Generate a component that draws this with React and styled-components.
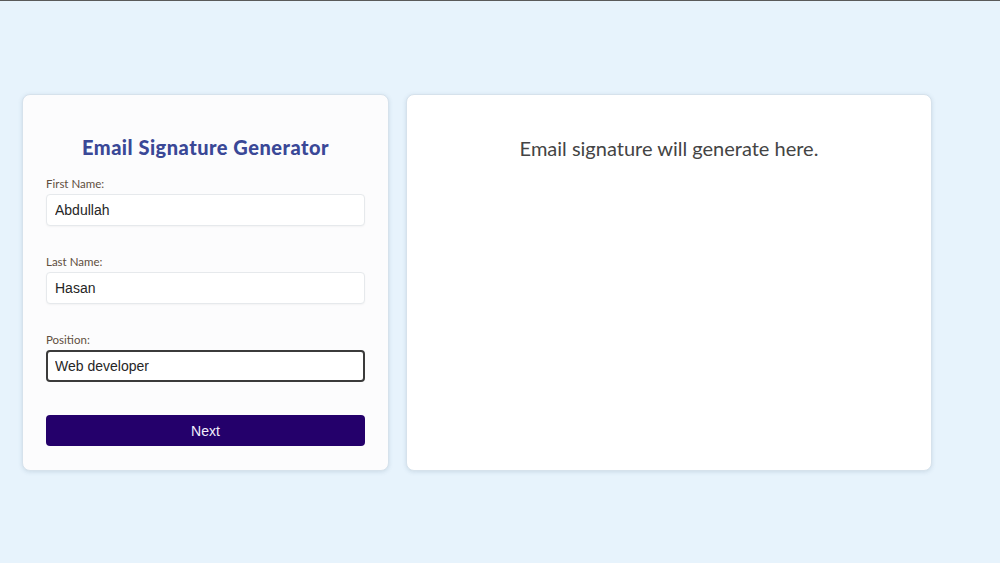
import React from "react";
import styled, { createGlobalStyle } from "styled-components";

const Global = createGlobalStyle`
  html, body { margin: 0; padding: 0; }
  body {
    background: #e7f3fc;
    font-family: "Lato", "Open Sans", sans-serif;
    min-height: 563px;
    border-top: 1px solid #5a5a5a;
    box-sizing: border-box;
  }
  * { box-sizing: border-box; }
`;

const Page = styled.div`
  display: flex;
  align-items: flex-start;
  gap: 17px;
  padding: 93px 0 0 22px;
`;

const Card = styled.div`
  background: ${(p) => (p.$tint ? "#fcfcfd" : "#ffffff")};
  border: 1px solid #d6e2ec;
  border-radius: 8px;
  box-shadow: 0 1px 4px rgba(80, 110, 140, 0.18);
  width: ${(p) => p.$width}px;
  height: 377px;
`;

const FormCard = styled(Card)`
  padding: 38px 23px 0 23px;
  display: flex;
  flex-direction: column;
`;

const Title = styled.h1`
  margin: 0 0 15px 0;
  text-align: center;
  font-family: "Lato", sans-serif;
  font-weight: 900;
  font-size: 20px;
  line-height: 28px;
  color: #3a4897;
  letter-spacing: 0.5px;
`;

const Field = styled.div`
  display: flex;
  flex-direction: column;
  margin-bottom: 28px;
`;

const Label = styled.label`
  font-family: "Lato", sans-serif;
  font-size: 11.5px;
  line-height: 16px;
  color: #5f4f3e;
  margin-bottom: 2px;
`;

const Input = styled.input`
  height: 32px;
  width: 100%;
  border: ${(p) => (p.$focus ? "2px solid #3b3b3b" : "1px solid #e6e9ec")};
  border-radius: 4px;
  background: #fff;
  padding: 0 ${(p) => (p.$focus ? 7 : 8)}px;
  font-family: "Liberation Sans", Arial, sans-serif;
  font-size: 14px;
  color: #262626;
  outline: none;
  box-shadow: ${(p) => (p.$focus ? "none" : "0 1px 2px rgba(0,0,0,0.04)")};
`;

const Button = styled.button`
  margin-top: 5px;
  height: 31px;
  width: 100%;
  border: none;
  border-radius: 4px;
  background: #24006b;
  color: #f2eefc;
  font-family: "Liberation Sans", Arial, sans-serif;
  font-size: 14px;
  cursor: pointer;
`;

const PreviewCard = styled(Card)`
  padding-top: 39px;
  display: flex;
  justify-content: center;
  align-items: flex-start;
`;

const Placeholder = styled.p`
  margin: 0;
  font-family: "Lato", sans-serif;
  font-size: 20px;
  line-height: 28px;
  color: #444;
`;

export default function App() {
  return (
    <>
      <Global />
      <Page>
        <FormCard $width={367} $tint>
          <Title>Email Signature Generator</Title>
          <Field>
            <Label>First Name:</Label>
            <Input defaultValue="Abdullah" />
          </Field>
          <Field>
            <Label>Last Name:</Label>
            <Input defaultValue="Hasan" />
          </Field>
          <Field>
            <Label>Position:</Label>
            <Input $focus defaultValue="Web developer" />
          </Field>
          <Button>Next</Button>
        </FormCard>
        <PreviewCard $width={526}>
          <Placeholder>Email signature will generate here.</Placeholder>
        </PreviewCard>
      </Page>
    </>
  );
}
